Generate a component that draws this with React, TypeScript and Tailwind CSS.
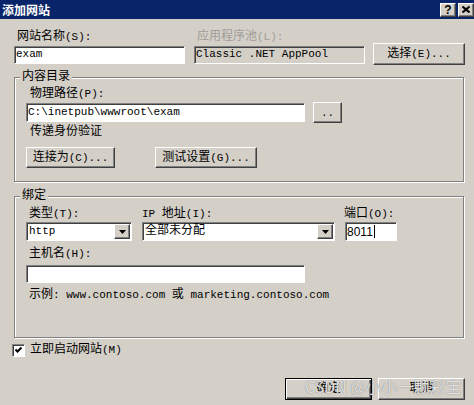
import type { ReactNode } from "react";

const cjk = /([\u2E80-\u9FFF\uFF00-\uFFEF]+)/;

// CJK runs get 12px, the monospace Latin stays at 11px
const Txt = ({ s }: { s: string }) => (
    <>
        {s.split(cjk).map((p, i) =>
            cjk.test(p) ? (
                <span key={i} className="text-[12px]">
                    {p}
                </span>
            ) : (
                p
            )
        )}
    </>
);

const sunken =
    "border border-t-[#808080] border-l-[#808080] border-b-white border-r-white shadow-[inset_1px_1px_0_#404040]";
const raised =
    "border border-t-white border-l-white border-b-[#404040] border-r-[#404040] shadow-[inset_-1px_-1px_0_#808080] bg-[#d4d0c8]";
const group =
    "border border-[#808080] shadow-[inset_1px_1px_0_#fff,1px_1px_0_#fff] pl-[5px] w-[450px]";

const Label = ({ s, className = "" }: { s: string; className?: string }) => (
    <div className={"h-[14px] leading-[14px] whitespace-nowrap " + className}>
        <Txt s={s} />
    </div>
);

const Button = ({ children, className = "" }: { children: ReactNode; className?: string }) => (
    <div className={raised + " flex items-center justify-center leading-[14px] " + className}>
        {children}
    </div>
);

const Arrow = () => (
    <div className={raised + " w-[16px] h-full flex items-center justify-center"}>
        <svg width="7" height="4" viewBox="0 0 7 4">
            <path d="M0 0h7L3.5 4z" fill="#000" />
        </svg>
    </div>
);

const Select = ({ value, className = "" }: { value: string; className?: string }) => (
    <div className={sunken + " bg-white h-[19px] flex items-stretch p-[1px] " + className}>
        <div className="flex-1 pl-[1px] leading-[15px] whitespace-nowrap">
            <Txt s={value} />
        </div>
        <Arrow />
    </div>
);

const App = () => {
    return (
        <div className="w-[474px] h-[405px] bg-[#d4d0c8] text-black text-[11px] font-['Liberation_Mono','Noto_Sans_CJK_SC',monospace] overflow-hidden relative">
            {/* title bar */}
            <div className="h-[19px] bg-[#0a246a] flex items-center pl-[2px]">
                <span className="text-white font-bold text-[12px] leading-[14px] font-['Noto_Sans_CJK_SC',sans-serif]">
                    添加网站
                </span>
                <div className="ml-auto flex gap-[2px]">
                    <div className={raised + " w-[16px] h-[14px] flex items-center justify-center font-bold text-[12px] font-['Liberation_Sans',sans-serif]"}>
                        ?
                    </div>
                    <div className={raised + " w-[16px] h-[14px] flex items-center justify-center"}>
                        <svg width="8" height="7" viewBox="0 0 8 7">
                            <path d="M0.5 0.5l7 6M7.5 0.5l-7 6" stroke="#000" strokeWidth="2" />
                        </svg>
                    </div>
                </div>
            </div>

            <div className="pl-[14px]">
                {/* site name / app pool */}
                <div className="flex items-start pt-[11px]">
                    <div className="w-[171px]">
                        <Label s="网站名称(S):" className="pl-[3px]" />
                        <div className={sunken + " bg-white h-[18px] mt-[2px] pl-[1px] leading-[15px]"}>exam</div>
                    </div>
                    <div className="w-[171px] ml-[9px]">
                        <Label s="应用程序池(L):" className="pl-[3px] text-[#a09d98]" />
                        <div className={sunken + " bg-[#d4d0c8] h-[18px] mt-[2px] pl-[1px] leading-[15px]"}>
                            Classic .NET AppPool
                        </div>
                    </div>
                    <Button className="w-[92px] h-[22px] ml-[8px] mt-[13px]">
                        <Txt s="选择(E)..." />
                    </Button>
                </div>

                {/* content directory */}
                <fieldset className={group + " mt-[5px] pb-[13px]"}>
                    <legend className="px-[2px] leading-[14px] text-[12px] bg-[#d4d0c8]">内容目录</legend>
                    <div className="ml-[6px]">
                        <Label s="物理路径(P):" className="pl-[4px] mt-[3px]" />
                        <div className="flex items-center mt-[1px] h-[21px]">
                            <div className={sunken + " bg-white w-[279px] h-[19px] pl-[1px] leading-[16px]"}>
                                C:\inetpub\wwwroot\exam
                            </div>
                            <Button className="w-[29px] h-[21px] ml-[8px]">..</Button>
                        </div>
                        <Label s="传递身份验证" className="pl-[4px] mt-[2px]" />
                        <div className="flex mt-[8px]">
                            <Button className="w-[89px] h-[21px]">
                                <Txt s="连接为(C)..." />
                            </Button>
                            <Button className="w-[102px] h-[21px] ml-[40px]">
                                <Txt s="测试设置(G)..." />
                            </Button>
                        </div>
                    </div>
                </fieldset>

                {/* bindings */}
                <fieldset className={group + " mt-[7px] pb-[35px]"}>
                    <legend className="px-[2px] leading-[14px] text-[12px] bg-[#d4d0c8]">绑定</legend>
                    <div className="ml-[6px]">
                        <div className="flex mt-[4px]">
                            <div className="w-[106px]">
                                <Label s="类型(T):" className="pl-[3px]" />
                                <Select value="http" className="mt-[1px]" />
                            </div>
                            <div className="w-[193px] ml-[10px]">
                                <Label s="IP 地址(I):" />
                                <Select value="全部未分配" className="mt-[1px]" />
                            </div>
                            <div className="w-[52px] ml-[10px]">
                                <Label s="端口(O):" className="-ml-[1px]" />
                                <div className={sunken + " bg-white h-[19px] mt-[1px] pl-[1px] flex items-center text-[12px] font-['Liberation_Sans',sans-serif]"}>
                                    8011
                                    <span className="w-px h-[13px] bg-black ml-[1px]" />
                                </div>
                            </div>
                        </div>
                        <Label s="主机名(H):" className="pl-[3px] mt-[6px]" />
                        <div className={sunken + " bg-white w-[279px] h-[18px] mt-[4px]"} />
                        <Label s="示例: www.contoso.com 或 marketing.contoso.com" className="pl-[3px] mt-[5px]" />
                    </div>
                </fieldset>

                {/* start now */}
                <div className="flex items-center mt-[5px] -ml-[2px]">
                    <div className={sunken + " bg-white w-[13px] h-[13px] flex items-center justify-center"}>
                        <svg width="7" height="7" viewBox="0 0 7 7">
                            <path d="M0.5 2.5l2 2l4-4" stroke="#000" strokeWidth="2" fill="none" />
                        </svg>
                    </div>
                    <Label s="立即启动网站(M)" className="ml-[5px]" />
                </div>
            </div>

            {/* dialog buttons */}
            <div className="flex justify-end gap-[6px] pr-[9px] mt-[21px]">
                <div className="w-[87px] h-[22px] border border-black shadow-[inset_1px_1px_0_#fff,inset_-1px_-1px_0_#404040,inset_-2px_-2px_0_#808080] flex items-center justify-center text-[12px] leading-[14px]">
                    确定
                </div>
                <Button className="w-[87px] h-[22px]">
                    <span className="text-[12px]">取消</span>
                </Button>
            </div>

            {/* watermark */}
            <div className="absolute left-[305px] top-[377px] text-[16px] leading-[18px] text-white/80 font-['Noto_Sans_CJK_SC',sans-serif] [text-shadow:0_0_1px_#555] whitespace-nowrap">
                CSDN @小小一颗彩宝
            </div>
        </div>
    );
};

export default App;
